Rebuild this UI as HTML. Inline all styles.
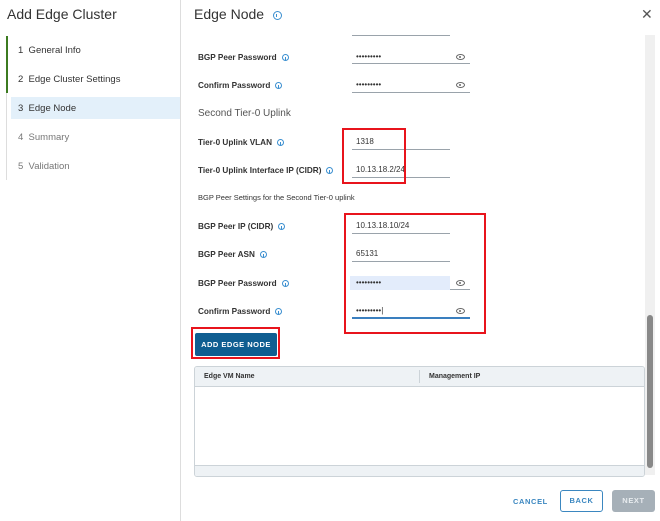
<!DOCTYPE html>
<html><head><style>
*{margin:0;padding:0;box-sizing:border-box}
body{width:660px;height:521px;background:#fff;font-family:"Liberation Sans",sans-serif;position:relative;overflow:hidden;color:#333}
.a{position:absolute}
.lbl{position:absolute;left:198px;font-size:8.2px;font-weight:bold;color:#333}
.i{display:inline-block;width:7px;height:7px;border:1px solid #3b8fd0;border-radius:50%;margin-left:5px;vertical-align:-1px;position:relative}
.i:after{content:"";position:absolute;left:2px;top:1.5px;width:1px;height:3px;background:#3b8fd0}
.ul{position:absolute;left:352px;width:98px;height:1px;background:#9aa3ab}
.ul2{position:absolute;left:352px;width:118px;height:1px;background:#9aa3ab}
.v{position:absolute;left:356px;font-size:8px;color:#333}
.eye{position:absolute;left:456px;width:9px;height:6px;border:1px solid #666;border-radius:50%}
.eye:after{content:"";position:absolute;left:2px;top:1px;width:2px;height:2px;background:#666;border-radius:50%}
.red{position:absolute;border:2px solid #e8141c}
.st{position:absolute;left:18px;font-size:9.5px;color:#333}
</style></head><body>
<div class="a" style="left:7px;top:6px;font-size:14px;color:#333">Add Edge Cluster</div>
<div class="a" style="left:180px;top:0;width:1px;height:521px;background:#ddd"></div>
<div class="a" style="left:6px;top:36px;width:2px;height:57px;background:#3c7b20"></div>
<div class="a" style="left:6px;top:93px;width:1px;height:87px;background:#ddd"></div>
<div class="a" style="left:11px;top:97px;width:169px;height:22px;background:#e3f0fa"></div>
<div class="st" style="top:45px">1&nbsp;&nbsp;General Info</div>
<div class="st" style="top:74px">2&nbsp;&nbsp;Edge Cluster Settings</div>
<div class="st" style="top:103px">3&nbsp;&nbsp;Edge Node</div>
<div class="st" style="top:132px;color:#777">4&nbsp;&nbsp;Summary</div>
<div class="st" style="top:161px;color:#777">5&nbsp;&nbsp;Validation</div>

<div class="a" style="left:194px;top:6px;font-size:14px;color:#333">Edge Node <span class="i" style="width:9px;height:9px"></span></div>
<div class="a" style="left:641px;top:6px;font-size:14px;color:#555">✕</div>

<div class="a" style="left:645px;top:35px;width:10px;height:440px;background:#f0f0f0"></div>
<div class="a" style="left:647px;top:315px;width:6px;height:153px;background:#888;border-radius:3px"></div>

<div class="ul" style="top:35px"></div>
<div class="lbl" style="top:53px">BGP Peer Password<span class="i"></span></div>
<div class="v" style="top:52px">•••••••••</div><div class="eye" style="top:54px"></div>
<div class="ul2" style="top:63px"></div>
<div class="lbl" style="top:81px">Confirm Password<span class="i"></span></div>
<div class="v" style="top:80px">•••••••••</div><div class="eye" style="top:82px"></div>
<div class="ul2" style="top:92px"></div>
<div class="a" style="left:198px;top:108px;font-size:10px;color:#555">Second Tier-0 Uplink</div>
<div class="lbl" style="top:138px">Tier-0 Uplink VLAN<span class="i"></span></div>
<div class="v" style="top:137px">1318</div><div class="ul" style="top:149px"></div>
<div class="lbl" style="top:166px">Tier-0 Uplink Interface IP (CIDR)<span class="i"></span></div>
<div class="v" style="top:165px">10.13.18.2/24</div><div class="ul" style="top:177px"></div>
<div class="a" style="left:198px;top:193px;font-size:7.5px;color:#333">BGP Peer Settings for the Second Tier-0 uplink</div>
<div class="lbl" style="top:222px">BGP Peer IP (CIDR)<span class="i"></span></div>
<div class="v" style="top:221px">10.13.18.10/24</div><div class="ul" style="top:233px"></div>
<div class="lbl" style="top:250px">BGP Peer ASN<span class="i"></span></div>
<div class="v" style="top:249px">65131</div><div class="ul" style="top:261px"></div>
<div class="lbl" style="top:279px">BGP Peer Password<span class="i"></span></div>
<div class="a" style="left:350px;top:276px;width:100px;height:14px;background:#e3ecfb"></div>
<div class="v" style="top:278px">•••••••••</div><div class="eye" style="top:280px"></div>
<div class="a" style="left:450px;top:289px;width:20px;height:1px;background:#9aa3ab"></div>
<div class="lbl" style="top:307px">Confirm Password<span class="i"></span></div>
<div class="v" style="top:306px">•••••••••|</div><div class="eye" style="top:308px"></div>
<div class="a" style="left:352px;top:317px;width:118px;height:2px;background:#3a7fbf"></div>

<div class="red" style="left:342px;top:128px;width:64px;height:56px"></div>
<div class="red" style="left:344px;top:213px;width:142px;height:121px"></div>
<div class="red" style="left:191px;top:327px;width:89px;height:32px"></div>
<div class="a" style="left:195px;top:333px;width:82px;height:23px;background:#0f5e91;border-radius:2px;color:#fff;font-size:7.5px;font-weight:bold;letter-spacing:.5px;text-align:center;line-height:23px">ADD EDGE NODE</div>

<div class="a" style="left:194px;top:366px;width:451px;height:111px;border:1px solid #ccd3d8;border-radius:3px;overflow:hidden">
<div style="height:20px;background:#eef2f5;border-bottom:1px solid #ccd3d8;position:relative;font-size:7px;font-weight:bold;color:#333">
<span style="position:absolute;left:9px;top:6px">Edge VM Name</span>
<span style="position:absolute;left:224px;top:3px;width:1px;height:13px;background:#ccd3d8"></span>
<span style="position:absolute;left:234px;top:6px">Management IP</span></div>
<div style="position:absolute;left:0;bottom:0;width:100%;height:11px;background:#eef2f5;border-top:1px solid #ccd3d8"></div>
</div>

<div class="a" style="left:513px;top:497px;font-size:7.5px;font-weight:bold;color:#3b87c0;letter-spacing:.6px">CANCEL</div>
<div class="a" style="left:560px;top:490px;width:43px;height:22px;border:1px solid #3b87c0;border-radius:3px;font-size:7.5px;font-weight:bold;color:#3b87c0;text-align:center;line-height:20px;letter-spacing:.6px">BACK</div>
<div class="a" style="left:612px;top:490px;width:43px;height:22px;background:#a6b0b8;border-radius:3px;font-size:7.5px;font-weight:bold;color:#e8ecef;text-align:center;line-height:22px;letter-spacing:.6px">NEXT</div>
</body></html>
